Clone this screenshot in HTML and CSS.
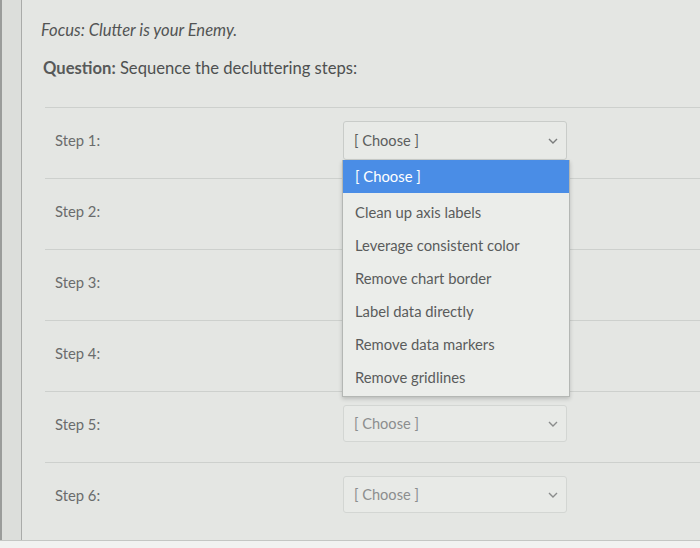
FILE: index.html
```html
<!DOCTYPE html>
<html>
<head>
<meta charset="utf-8">
<link rel="stylesheet" href="styles.css">
</head>
<body>
<div class="screen">
  <div class="gutter"></div>
  <main class="quiz">
    <p class="focus">Focus: Clutter is your Enemy.</p>
    <p class="question"><strong>Question:</strong> Sequence the decluttering steps:</p>
    <div class="rows">
      <div class="row">
        <div class="label">Step 1:</div>
        <div class="select-wrap">
          <div class="select"><span>[ Choose ]</span><svg class="chev" viewBox="0 0 10 6" width="10" height="6"><path d="M1 1l4 4 4-4" fill="none" stroke="#7a7c7c" stroke-width="1.4"/></svg></div>
          <ul class="menu">
            <li class="active">[ Choose ]</li>
            <li>Clean up axis labels</li>
            <li>Leverage consistent color</li>
            <li>Remove chart border</li>
            <li>Label data directly</li>
            <li>Remove data markers</li>
            <li>Remove gridlines</li>
          </ul>
        </div>
      </div>
      <div class="row">
        <div class="label">Step 2:</div>
        <div class="select covered"><span>[ Choose ]</span></div>
      </div>
      <div class="row">
        <div class="label">Step 3:</div>
        <div class="select covered"><span>[ Choose ]</span></div>
      </div>
      <div class="row">
        <div class="label">Step 4:</div>
        <div class="select covered"><span>[ Choose ]</span></div>
      </div>
      <div class="row">
        <div class="label">Step 5:</div>
        <div class="select light"><span>[ Choose ]</span><svg class="chev" viewBox="0 0 10 6" width="10" height="6"><path d="M1 1l4 4 4-4" fill="none" stroke="#8a8c8c" stroke-width="1.4"/></svg></div>
      </div>
      <div class="row last">
        <div class="label">Step 6:</div>
        <div class="select light"><span>[ Choose ]</span><svg class="chev" viewBox="0 0 10 6" width="10" height="6"><path d="M1 1l4 4 4-4" fill="none" stroke="#8a8c8c" stroke-width="1.4"/></svg></div>
      </div>
    </div>
  </main>
</div>
<div class="bottom"></div>
</body>
</html>
```
FILE: styles.css
```css
html, body {
  margin: 0;
  padding: 0;
}
body {
  width: 700px;
  height: 548px;
  overflow: hidden;
  background: #e4e6e3;
  font-family: Lato, "Open Sans", sans-serif;
  color: #505252;
}
.screen {
  display: flex;
  height: 540px;
}
.gutter {
  width: 22px;
  flex: none;
  background: #dcdedb;
  border-left: 2px solid #9a9c9a;
  border-right: 1px solid #a9aba9;
  box-sizing: border-box;
}
.quiz {
  flex: 1;
  padding-left: 18px;
  display: flex;
  flex-direction: column;
}
.focus {
  margin: 18px 0 0 1px;
  font-size: 16.6px;
  font-style: italic;
  line-height: 24px;
  color: #525454;
}
.question {
  margin: 14px 0 0 3px;
  font-size: 16.6px;
  line-height: 24px;
  color: #4e5050;
}
.question strong {
  font-weight: 700;
  color: #575959;
}
.rows {
  margin-top: 27px;
  margin-left: 5px;
}
.row {
  height: 71px;
  box-sizing: border-box;
  border-top: 1px solid #cdd0cd;
  display: grid;
  grid-template-columns: 298px 224px;
  align-items: start;
  padding-top: 13px;
}
.row.last {
  height: 78px;
}
.label {
  font-size: 14.8px;
  line-height: 38px;
  padding-left: 10px;
  color: #6a6c6c;
}
.select-wrap {
  position: relative;
}
.select {
  height: 39px;
  box-sizing: border-box;
  border: 1px solid #c9ccc9;
  border-radius: 3px;
  background: #e8eae7;
  display: flex;
  align-items: center;
  justify-content: space-between;
  padding: 0 8px 0 10px;
  font-size: 14.6px;
  color: #5c5e5e;
}
.select.covered {
  visibility: hidden;
}
.select.light {
  height: 37px;
  color: #8c8e8e;
  border-color: #d3d6d3;
}
.chev {
  display: block;
}
.menu {
  position: absolute;
  left: -1px;
  top: 39px;
  width: 226px;
  margin: 0;
  padding: 0 0 2px;
  list-style: none;
  background: #ebedea;
  border: 1px solid #b4b7b4;
  border-top: none;
  box-shadow: 0 2px 4px rgba(0,0,0,0.18);
  z-index: 2;
}
.menu li {
  height: 33px;
  line-height: 33px;
  padding-left: 12px;
  font-size: 14.8px;
  color: #5a5c5c;
}
.menu li.active {
  background: #4a8de6;
  color: #ffffff;
  margin-bottom: 3px;
}
.bottom {
  height: 8px;
  background: #f1f2f1;
  border-top: 1px solid #c4c6c4;
}
```
